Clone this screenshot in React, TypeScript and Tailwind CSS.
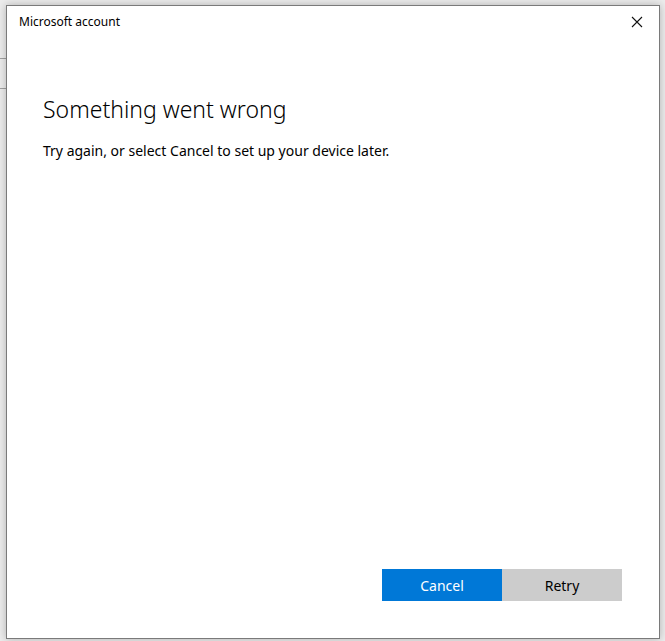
export default function App() {
  return (
    <div className="w-[665px] h-[641px] bg-[#ececec] relative overflow-hidden" style={{ fontFamily: '"Noto Sans", "Open Sans", sans-serif' }}>
      <div className="absolute left-0 top-[58px] w-[6px] h-px bg-[#a0a0a0]" />
      <div className="absolute left-0 top-[88px] w-[6px] h-px bg-[#a0a0a0]" />
      <div className="absolute left-[6px] top-[5px] w-[654px] h-[634px] bg-white border border-[#7a7a7a] shadow-[0_0_8px_rgba(0,0,0,0.25)] flex flex-col">
        <div className="h-[32px] flex items-center justify-between pl-[12px] pr-[16px]">
          <span className="text-[12px] text-black">Microsoft account</span>
          <svg width="12" height="12" viewBox="0 0 12 12"><path d="M1 1L11 11M11 1L1 11" stroke="#111" strokeWidth="1.1" /></svg>
        </div>
        <div className="pl-[36px] pt-[55px] flex-1">
          <h1 className="text-[23px] font-light text-black leading-[32px]">Something went wrong</h1>
          <p className="text-[14px] text-black mt-[15px]">Try again, or select Cancel to set up your device later.</p>
        </div>
        <div className="flex justify-end pr-[37px] pb-[37px]">
          <button className="w-[120px] h-[32px] bg-[#0078d7] text-white text-[14px]">Cancel</button>
          <button className="w-[120px] h-[32px] bg-[#cccccc] text-black text-[14px]">Retry</button>
        </div>
      </div>
    </div>
  );
}
